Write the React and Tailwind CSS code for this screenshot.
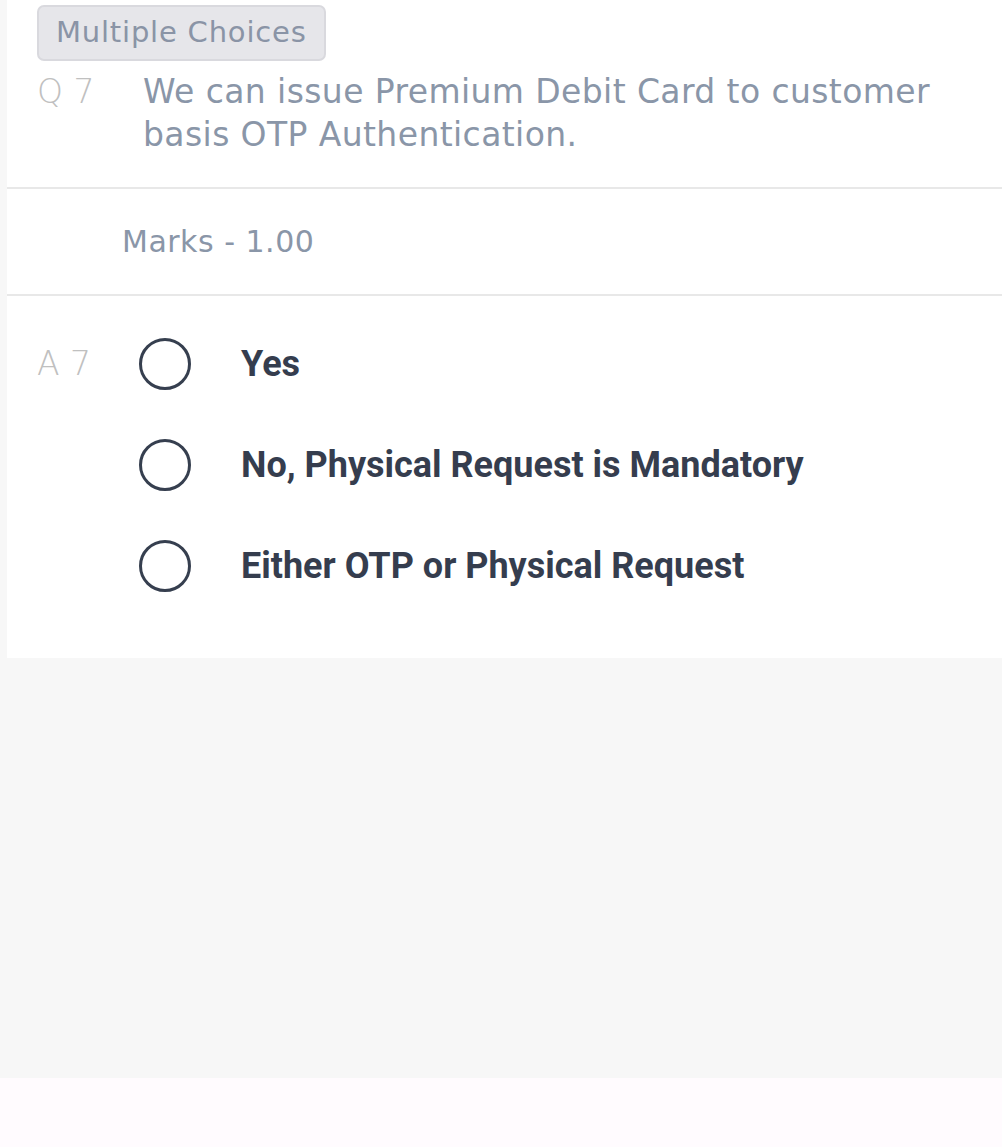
import React from "react";

const options = ["Yes", "No, Physical Request is Mandatory", "Either OTP or Physical Request"];

const App = () => {
  return (
    <div className="min-h-[1147px] bg-[#f7f7f7] flex flex-col">
      <div className="ml-[7px] bg-white h-[658px] flex flex-col">
        <div className="pl-[30px] pt-[5px]">
          <div className="inline-flex items-center h-[56px] px-[17px] rounded-[7px] bg-[#e6e6ea] border-2 border-[#d9d9de] text-[29px] tracking-[0.8px] text-[#8a94a6] font-['DejaVu_Sans',sans-serif]">
            Multiple Choices
          </div>
        </div>
        <div className="flex pl-[30px] pt-[9px] h-[126px] font-['DejaVu_Sans',sans-serif]">
          <div className="w-[106px] text-[33px] leading-[43px] text-[#c0c0c0] font-light">Q 7</div>
          <div className="flex-1 text-[33px] leading-[43px] tracking-[0.4px] text-[#8a96a8] pr-4">
            We can issue Premium Debit Card to customer basis OTP Authentication.
          </div>
        </div>
        <div className="h-[2px] bg-[#e8e8e8]" />
        <div className="h-[105px] flex items-center pl-[115px] text-[30px] tracking-[0.5px] text-[#8a96a8] font-['DejaVu_Sans',sans-serif]">
          Marks - 1.00
        </div>
        <div className="h-[2px] bg-[#e8e8e8]" />
        <div className="flex pl-[30px] pt-[42px]">
          <div className="w-[102px] text-[33px] leading-[52px] text-[#c0c0c0] font-['DejaVu_Sans',sans-serif] font-light">A 7</div>
          <div className="flex flex-col gap-[49px]">
            {options.map((o) => (
              <label key={o} className="flex items-center gap-[50px] h-[52px]">
                <span className="w-[52px] h-[52px] rounded-full border-[3px] border-[#363f4f]" />
                <span className="text-[36px] font-bold text-[#353d4e] font-['Roboto',sans-serif]">{o}</span>
              </label>
            ))}
          </div>
        </div>
      </div>
      <div className="flex-1" />
      <div className="h-[69px] bg-[#fffbfe]" />
    </div>
  );
};

export default App;
